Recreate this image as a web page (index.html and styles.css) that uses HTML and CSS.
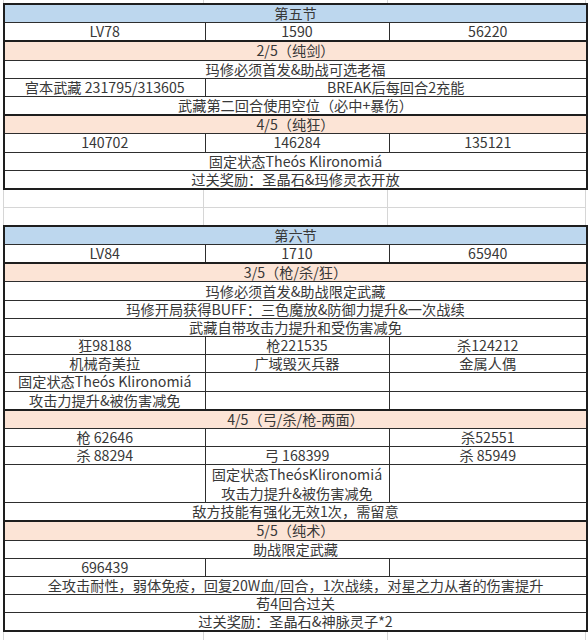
FILE: index.html
```html
<!DOCTYPE html>
<html lang="zh">
<head>
<meta charset="utf-8">
<title>第五节 / 第六节</title>
<link rel="stylesheet" href="styles.css">
</head>
<body>
<div class="sheet">
  <div class="strip top"><span></span><span></span><span></span></div>

  <table class="block">
    <colgroup><col class="c1"><col class="c2"><col class="c3"></colgroup>
    <tr class="head"><td colspan="3">第五节</td></tr>
    <tr><td>LV78</td><td>1590</td><td>56220</td></tr>
    <tr class="wave"><td colspan="3">2/5（纯剑）</td></tr>
    <tr><td colspan="3">玛修必须首发&amp;助战可选老福</td></tr>
    <tr><td>宫本武藏 231795/313605</td><td colspan="2">BREAK后每回合2充能</td></tr>
    <tr><td colspan="3">武藏第二回合使用空位（必中+暴伤）</td></tr>
    <tr class="wave"><td colspan="3">4/5（纯狂）</td></tr>
    <tr><td>140702</td><td>146284</td><td>135121</td></tr>
    <tr><td colspan="3">固定状态Theós Klironomiá</td></tr>
    <tr><td colspan="3">过关奖励：圣晶石&amp;玛修灵衣开放</td></tr>
  </table>

  <div class="blank">
    <div class="blank-row"><span></span><span></span><span></span></div>
    <div class="blank-row"><span></span><span></span><span></span></div>
  </div>

  <table class="block">
    <colgroup><col class="c1"><col class="c2"><col class="c3"></colgroup>
    <tr class="head"><td colspan="3">第六节</td></tr>
    <tr><td>LV84</td><td>1710</td><td>65940</td></tr>
    <tr class="wave"><td colspan="3">3/5（枪/杀/狂）</td></tr>
    <tr><td colspan="3">玛修必须首发&amp;助战限定武藏</td></tr>
    <tr><td colspan="3">玛修开局获得BUFF：三色魔放&amp;防御力提升&amp;一次战续</td></tr>
    <tr><td colspan="3">武藏自带攻击力提升和受伤害减免</td></tr>
    <tr><td>狂98188</td><td>枪221535</td><td>杀124212</td></tr>
    <tr><td>机械奇美拉</td><td>广域毁灭兵器</td><td>金属人偶</td></tr>
    <tr><td>固定状态Theós Klironomiá</td><td></td><td></td></tr>
    <tr><td>攻击力提升&amp;被伤害减免</td><td></td><td></td></tr>
    <tr class="wave"><td colspan="3">4/5（弓/杀/枪-两面）</td></tr>
    <tr><td>枪 62646</td><td></td><td>杀52551</td></tr>
    <tr><td>杀 88294</td><td>弓 168399</td><td>杀 85949</td></tr>
    <tr class="double"><td></td><td>固定状态TheósKlironomiá<br>攻击力提升&amp;被伤害减免</td><td></td></tr>
    <tr><td colspan="3">敌方技能有强化无效1次，需留意</td></tr>
    <tr class="wave"><td colspan="3">5/5（纯术）</td></tr>
    <tr><td colspan="3">助战限定武藏</td></tr>
    <tr><td>696439</td><td></td><td></td></tr>
    <tr><td colspan="3">全攻击耐性，弱体免疫，回复20W血/回合，1次战续，对星之力从者的伤害提升</td></tr>
    <tr><td colspan="3">苟4回合过关</td></tr>
    <tr><td colspan="3">过关奖励：圣晶石&amp;神脉灵子*2</td></tr>
  </table>

  <div class="strip bottom"><span></span><span></span><span></span></div>
</div>
</body>
</html>
```

FILE: styles.css
```css
html, body {
  margin: 0;
  padding: 0;
  background: #ffffff;
}

.sheet {
  width: 583px;
  margin-left: 3px;
  font-family: "Noto Sans CJK SC", "Noto Sans", sans-serif;
  font-size: 14.2px;
  color: #383838;
}

.block {
  width: 583px;
  border-collapse: collapse;
  table-layout: fixed;
  border: 2px solid #1e1e1e;
}

.c1 { width: 201px; }
.c2 { width: 184px; }
.c3 { width: 198px; }

.block td {
  border: 1px solid #2e2e2e;
  padding: 0;
  height: 17.2px;
  line-height: 17px;
  text-align: center;
  vertical-align: middle;
  white-space: nowrap;
  overflow: hidden;
}

.block tr.head td {
  background: #bdd7ee;
}

.block tr.wave td {
  background: #fce4d6;
  border-top: 2px solid #1e1e1e;
}

.block tr.double td {
  height: 35.4px;
  line-height: 18.4px;
}

.strip {
  display: flex;
}

.strip span,
.blank-row span {
  display: block;
  box-sizing: border-box;
  border-right: 1px solid #d6d6d6;
}

.strip span:nth-child(1),
.blank-row span:nth-child(1) { width: 201px; border-left: 1px solid #d6d6d6; }
.strip span:nth-child(2),
.blank-row span:nth-child(2) { width: 184px; }
.strip span:nth-child(3),
.blank-row span:nth-child(3) { width: 198px; }

.strip.top { height: 3px; }
.strip.bottom { height: 8px; }

.blank-row {
  display: flex;
  height: 17px;
}

.blank-row + .blank-row {
  border-top: 1px solid #d6d6d6;
}

.blank-row span { height: 100%; }
```
